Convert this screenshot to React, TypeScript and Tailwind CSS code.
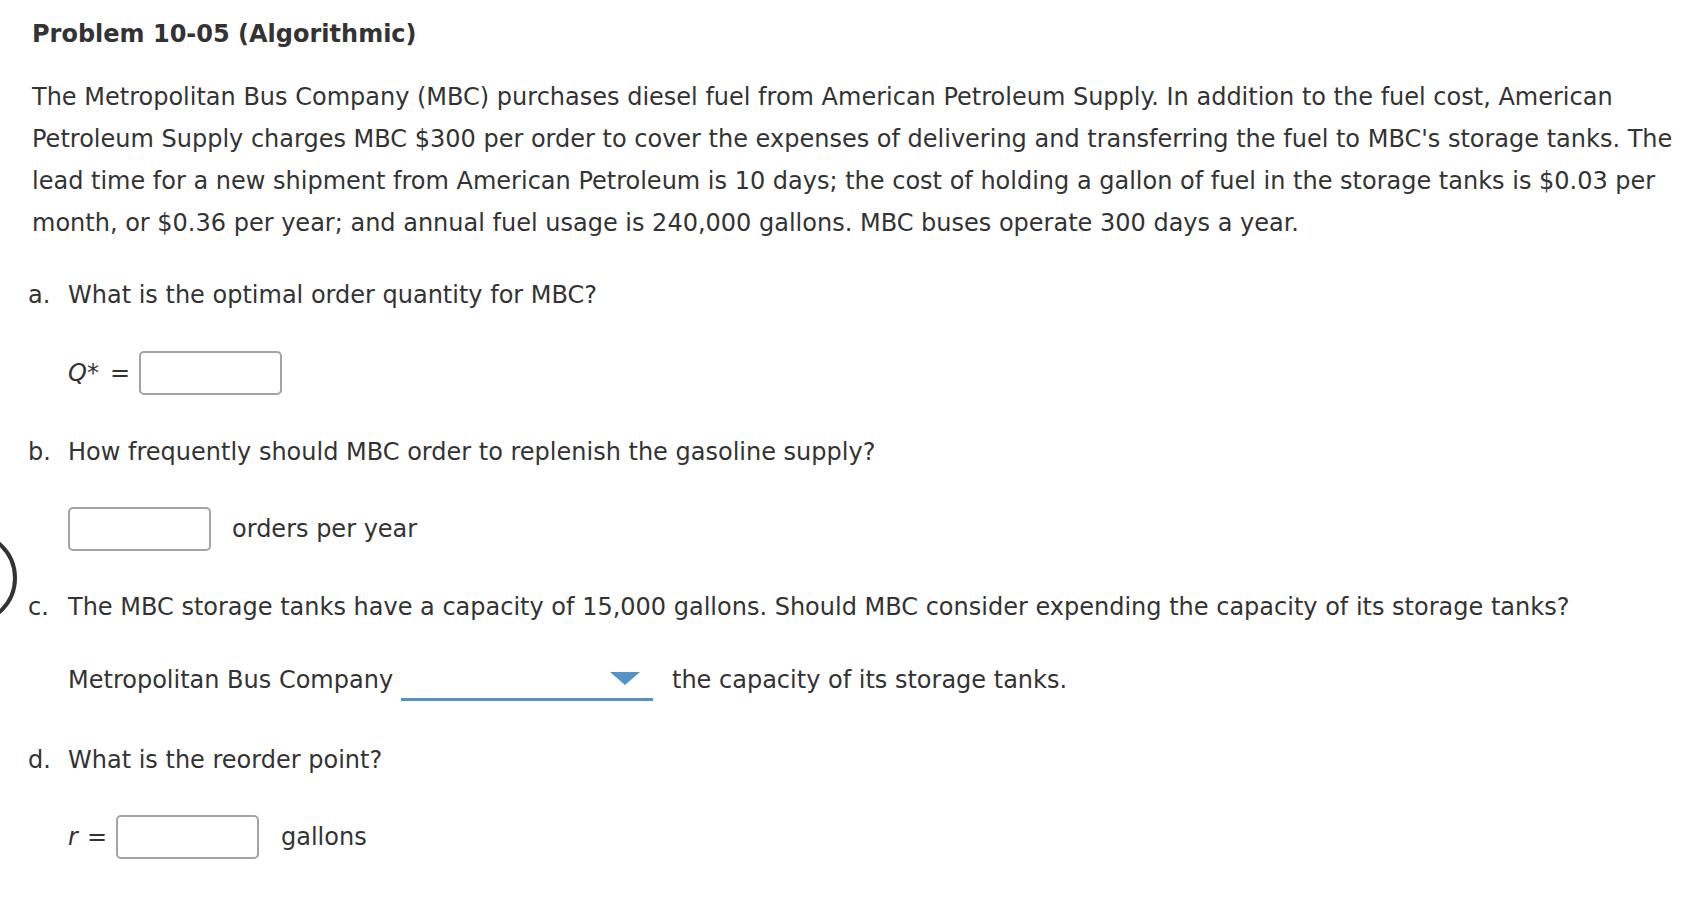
import React from "react";

function Box({ className = "" }: { className?: string }) {
  return <div className={`h-[44px] w-[143px] shrink-0 rounded-[5px] border-2 border-[#a3a3a3] bg-white ${className}`} />;
}

export default function App() {
  return (
    <div className="relative min-h-[902px] w-[1694px] overflow-hidden bg-white text-[#333] font-['DejaVu_Sans',Verdana,sans-serif] text-[24px]">
      {/* partial circle at left edge */}
      <div className="absolute left-[-77px] top-[531px] h-[94px] w-[94px] rounded-full border-[4px] border-[#333]" />

      <div className="pl-[32px] pr-[8px] pt-[19px]">
        <h1 className="text-[24px] font-bold leading-[30px]">Problem 10-05 (Algorithmic)</h1>

        <p className="mt-[27px] leading-[42px]">
          The Metropolitan Bus Company (MBC) purchases diesel fuel from American Petroleum Supply. In addition to the fuel cost, American Petroleum Supply charges MBC $300 per order to cover the expenses of delivering and transferring the fuel to MBC's storage tanks. The lead time for a new shipment from American Petroleum is 10 days; the cost of holding a gallon of fuel in the storage tanks is $0.03 per month, or $0.36 per year; and annual fuel usage is 240,000 gallons. MBC buses operate 300 days a year.
        </p>
      </div>

      <div className="pl-[28px] pt-[36px]">
        <div className="flex leading-[30px]">
          <span className="w-[40px]">a.</span>
          <span>What is the optimal order quantity for MBC?</span>
        </div>
        <div className="ml-[40px] mt-[41px] flex items-center">
          <span className="flex w-[71px]">
            <span className="italic">Q*</span>
            <span className="ml-[11px]">=</span>
          </span>
          <Box />
        </div>

        <div className="mt-[42px] flex leading-[30px]">
          <span className="w-[40px]">b.</span>
          <span>How frequently should MBC order to replenish the gasoline supply?</span>
        </div>
        <div className="ml-[40px] mt-[40px] flex items-center gap-[21px]">
          <Box />
          <span>orders per year</span>
        </div>

        <div className="mt-[41px] flex leading-[30px]">
          <span className="w-[40px]">c.</span>
          <span>The MBC storage tanks have a capacity of 15,000 gallons. Should MBC consider expending the capacity of its storage tanks?</span>
        </div>
        <div className="ml-[40px] mt-[43px] flex items-start">
          <span className="w-[333px] leading-[30px]">Metropolitan Bus Company</span>
          <div className="flex h-[36px] w-[252px] items-start justify-end border-b-[3px] border-[#5593c6] pr-[13px] pt-[7px]">
            <svg width="30" height="14" viewBox="0 0 30 14">
              <polygon points="0,0 30,0 15,13" fill="#5593c6" />
            </svg>
          </div>
          <span className="ml-[19px] leading-[30px]">the capacity of its storage tanks.</span>
        </div>

        <div className="mt-[44px] flex leading-[30px]">
          <span className="w-[40px]">d.</span>
          <span>What is the reorder point?</span>
        </div>
        <div className="ml-[40px] mt-[40px] flex items-center">
          <span className="flex w-[48px]">
            <span className="italic">r</span>
            <span className="ml-[9px]">=</span>
          </span>
          <Box />
          <span className="ml-[22px]">gallons</span>
        </div>
      </div>
    </div>
  );
}
